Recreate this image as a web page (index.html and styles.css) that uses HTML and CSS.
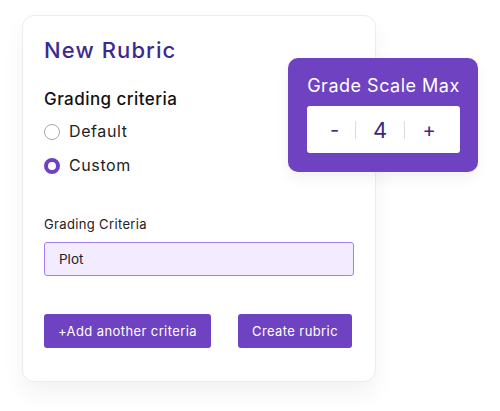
FILE: index.html
```html
<!DOCTYPE html>
<html>
<head>
<meta charset="utf-8">
<link rel="stylesheet" href="styles.css">
</head>
<body>
<div class="stage">
  <div class="card">
    <h1 class="title">New Rubric</h1>
    <h2 class="subtitle">Grading criteria</h2>
    <div class="options">
      <label class="option"><span class="radio"></span><span>Default</span></label>
      <label class="option"><span class="radio checked"></span><span>Custom</span></label>
    </div>
    <div class="field">
      <div class="field-label">Grading Criteria</div>
      <div class="input">Plot</div>
    </div>
    <div class="actions">
      <button class="btn btn-add">+Add another criteria</button>
      <button class="btn btn-create">Create rubric</button>
    </div>
  </div>
  <div class="scale">
    <div class="scale-title">Grade Scale Max</div>
    <div class="stepper">
      <span class="step minus">-</span>
      <span class="divider"></span>
      <span class="step value">4</span>
      <span class="divider"></span>
      <span class="step plus">+</span>
    </div>
  </div>
</div>
</body>
</html>
```

FILE: styles.css
```css
html, body {
  margin: 0;
  padding: 0;
  background: #ffffff;
}
body {
  font-family: "Inter", "Open Sans", sans-serif;
  width: 500px;
  height: 411px;
  overflow: hidden;
}
.stage {
  position: relative;
  width: 500px;
  height: 411px;
  padding: 15px 0 0 22px;
  box-sizing: border-box;
}
.card {
  width: 354px;
  height: 367px;
  box-sizing: border-box;
  border: 1px solid #ececf0;
  border-radius: 12px;
  background: #fff;
  box-shadow: 0 12px 22px rgba(0, 0, 0, 0.05);
  padding: 20px 21px 0 21px;
  display: flex;
  flex-direction: column;
}
.title {
  margin: 0;
  font-size: 22px;
  font-weight: 500;
  color: #3d2a8e;
  line-height: 28px;
  letter-spacing: 1.1px;
}
.subtitle {
  margin: 23px 0 0 0;
  font-size: 17px;
  font-weight: 500;
  color: #111;
  line-height: 24px;
  letter-spacing: 0.45px;
}
.options {
  display: flex;
  flex-direction: column;
  gap: 11px;
  margin-top: 9px;
}
.option {
  display: flex;
  align-items: center;
  gap: 9px;
  font-size: 16px;
  color: #222;
  line-height: 23px;
  letter-spacing: 0.6px;
}
.radio {
  width: 16px;
  height: 16px;
  box-sizing: border-box;
  border-radius: 50%;
  border: 1px solid #a8a8ad;
  background: #fff;
}
.radio.checked {
  border: 4.5px solid #6f42c1;
}
.field {
  margin-top: 38px;
}
.field-label {
  font-size: 13px;
  color: #222;
  line-height: 18px;
  letter-spacing: 0.35px;
}
.input {
  margin-top: 9px;
  height: 34px;
  width: 310px;
  box-sizing: border-box;
  background: #f3ebff;
  border: 1.5px solid #a67ef2;
  border-radius: 3px;
  padding: 0 14px;
  font-size: 13.5px;
  color: #222;
  display: flex;
  align-items: center;
}
.actions {
  display: flex;
  justify-content: space-between;
  margin-top: 38px;
  width: 308px;
}
.btn {
  height: 34px;
  border: none;
  border-radius: 3px;
  background: #6f42c1;
  color: #fff;
  font-family: inherit;
  font-size: 13px;
  letter-spacing: 0.4px;
  padding: 0;
}
.btn-add { width: 167px; }
.btn-create { width: 114px; }
.scale {
  position: absolute;
  left: 288px;
  top: 58px;
  width: 190px;
  height: 114px;
  box-sizing: border-box;
  background: #6f42c1;
  border-radius: 10px;
  padding: 16px 18px 0 19px;
  display: flex;
  flex-direction: column;
  align-items: center;
  box-shadow: 0 6px 14px rgba(0, 0, 0, 0.06);
}
.scale-title {
  color: #fff;
  font-size: 18px;
  line-height: 24px;
  letter-spacing: 0.5px;
  white-space: nowrap;
}
.stepper {
  margin-top: 8px;
  width: 153px;
  height: 47px;
  box-sizing: border-box;
  padding-left: 7px;
  background: #fff;
  border-radius: 3px;
  display: flex;
  align-items: center;
  justify-content: flex-start;
  color: #3a2a80;
}
.step {
  text-align: center;
  font-size: 20px;
  line-height: 24px;
}
.step.minus { width: 41px; }
.step.value { width: 48px; font-size: 22px; }
.step.plus { width: 48px; }
.divider {
  width: 1px;
  height: 18px;
  background: #dcdcdc;
}
```
